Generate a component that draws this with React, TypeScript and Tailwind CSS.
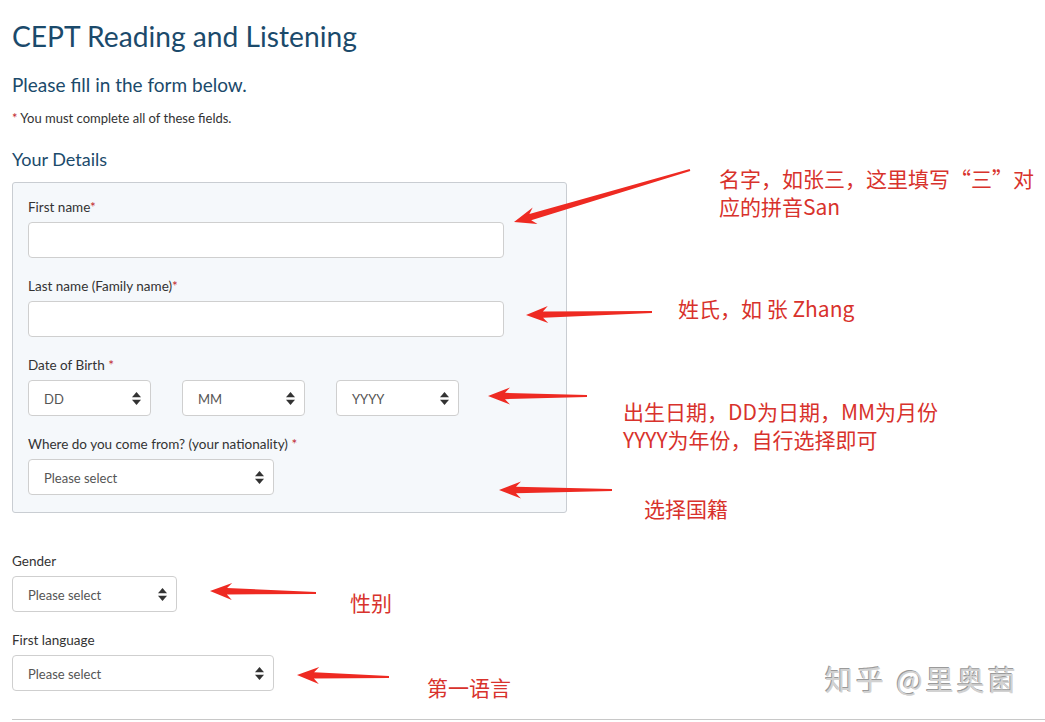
import React from "react";

const FONT = { fontFamily: 'Lato, "Noto Sans", sans-serif' };
const CJK = { fontFamily: '"Noto Sans CJK SC", "Noto Sans", sans-serif' };

function Updown() {
  return (
    <svg width="9" height="13" viewBox="0 0 9 13" className="shrink-0">
      <polygon points="4.5,0 9,5.2 0,5.2" fill="#333" />
      <polygon points="0,7.8 9,7.8 4.5,13" fill="#333" />
    </svg>
  );
}

function Select({ text, w }: { text: string; w: string }) {
  return (
    <div
      className={`${w} h-[36px] flex items-center justify-between bg-white border border-[#cfcfcf] rounded-[4px] pl-[15px] pr-[9px] text-[13px] text-[#555]`}
    >
      <span className="pt-[3px]">{text}</span>
      <Updown />
    </div>
  );
}

function Label({ children, req }: { children: React.ReactNode; req?: string }) {
  return (
    <div className="h-[17px] leading-[19px] text-[13.5px] text-[#333] mb-[7px]">
      {children}
      {req !== undefined && <span className="text-[#c0262d]">{req}</span>}
    </div>
  );
}

function Arrow({ tx, ty, hx, hy }: { tx: number; ty: number; hx: number; hy: number }) {
  const dx = tx - hx;
  const dy = ty - hy;
  const L = Math.sqrt(dx * dx + dy * dy);
  const ux = dx / L;
  const uy = dy / L;
  const nx = -uy;
  const ny = ux;
  const pts: [number, number][] = [
    [0, 0],
    [22, -8.5],
    [17, -3.2],
    [L, -1],
    [L, 1],
    [17, 3.2],
    [22, 8.5],
  ];
  const s = pts
    .map(([a, b]) => `${(hx + ux * a + nx * b).toFixed(1)},${(hy + uy * a + ny * b).toFixed(1)}`)
    .join(" ");
  return <polygon points={s} fill="#ee2a22" />;
}

export default function App() {
  return (
    <div className="relative w-[1045px] h-[722px] overflow-hidden bg-white" style={FONT}>
      <div className="pl-[12px] pt-[18px]">
        <h1 className="text-[28.2px] leading-[36px] text-[#1b4a6b]">CEPT Reading and Listening</h1>
        <p className="mt-[18px] text-[19px] leading-[26px] text-[#1b4a6b]">Please fill in the form below.</p>
        <p className="mt-[12px] text-[13px] leading-[17px] text-[#333]">
          <span className="text-[#c0262d]">*</span> You must complete all of these fields.
        </p>
        <h2 className="mt-[20px] text-[18px] leading-[24px] text-[#1b4a6b]">Your Details</h2>

        <div className="mt-[11px] w-[555px] bg-[#f5f8fb] border border-[#c9cdd2] rounded-[3px] pt-[15px] pb-[17px] pl-[15px]">
          <Label req="*">First name</Label>
          <div className="w-[476px] h-[36px] bg-white border border-[#cfcfcf] rounded-[4px] mb-[19px]" />
          <Label req="*">Last name (Family name)</Label>
          <div className="w-[476px] h-[36px] bg-white border border-[#cfcfcf] rounded-[4px] mb-[19px]" />
          <Label req=" *">Date of Birth</Label>
          <div className="flex gap-[31px] mb-[19px]">
            <Select text="DD" w="w-[123px]" />
            <Select text="MM" w="w-[123px]" />
            <Select text="YYYY" w="w-[123px]" />
          </div>
          <Label req=" *">Where do you come from? (your nationality)</Label>
          <Select text="Please select" w="w-[246px]" />
        </div>

        <div className="mt-[39px]">
          <Label>Gender</Label>
          <Select text="Please select" w="w-[165px]" />
        </div>
        <div className="mt-[19px]">
          <Label>First language</Label>
          <Select text="Please select" w="w-[262px]" />
        </div>
        <div className="mt-[28px] border-t border-[#c8c8c8]" />
      </div>

      <svg className="absolute inset-0 pointer-events-none" width="1045" height="722">
        <Arrow tx={690} ty={170} hx={514} hy={222} />
        <Arrow tx={652} ty={312} hx={526} hy={315} />
        <Arrow tx={587} ty={396} hx={488} hy={396} />
        <Arrow tx={612} ty={490} hx={499} hy={490} />
        <Arrow tx={316} ty={593} hx={210} hy={591} />
        <Arrow tx={389} ty={677} hx={297} hy={675} />
      </svg>

      <div className="absolute inset-0 pointer-events-none text-[#d8322c] text-[21px] leading-[28px]" style={CJK}>
        <div className="absolute left-[719px] top-[164px] whitespace-nowrap">
          名字，如张三，这里填写“三”对
          <br />
          应的拼音San
        </div>
        <div className="absolute left-[678px] top-[294px] whitespace-nowrap">姓氏，如 张 Zhang</div>
        <div className="absolute left-[623px] top-[397px] whitespace-nowrap">
          出生日期，DD为日期，MM为月份
          <br />
          YYYY为年份，自行选择即可
        </div>
        <div className="absolute left-[644px] top-[494px] whitespace-nowrap">选择国籍</div>
        <div className="absolute left-[350px] top-[588px] whitespace-nowrap">性别</div>
        <div className="absolute left-[427px] top-[673px] whitespace-nowrap">第一语言</div>
        <div
          className="absolute left-[825px] top-[661px] whitespace-nowrap text-[28px] leading-[36px] tracking-[3px] text-[#d2d2d2]"
          style={{ textShadow: "-1px -1px 0 #9a9a9a, 1px 1px 0 #ffffff" }}
        >
          知乎 @里奥菌
        </div>
      </div>
    </div>
  );
}
